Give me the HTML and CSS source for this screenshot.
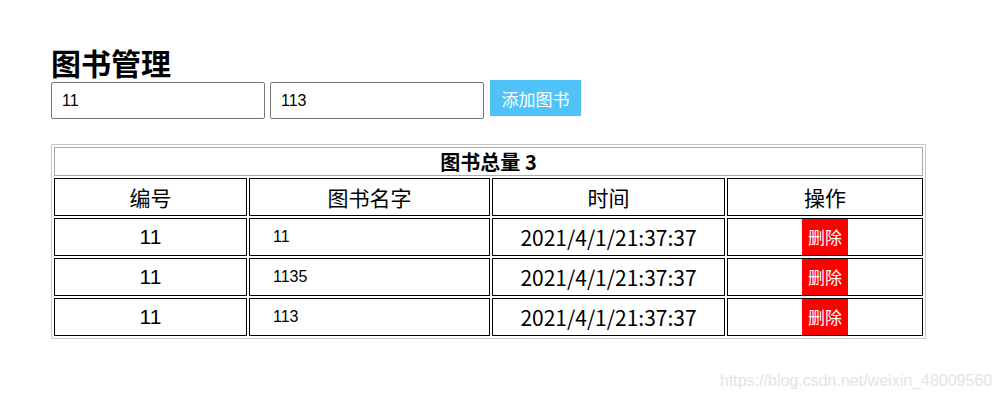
FILE: index.html
```html
<!DOCTYPE html>
<html lang="zh">
<head>
<meta charset="utf-8">
<title>图书管理</title>
<link rel="stylesheet" href="styles.css">
</head>
<body>
<div class="page">
  <h1 class="title">图书管理</h1>
  <div class="controls">
    <input class="field" type="text" value="11">
    <input class="field" type="text" value="113">
    <button class="add-btn">添加图书</button>
  </div>
  <table class="books">
    <colgroup>
      <col class="c1">
      <col class="c2">
      <col class="c3">
      <col class="c4">
    </colgroup>
    <tr>
      <th class="caption" colspan="4">图书总量 3</th>
    </tr>
    <tr class="head">
      <td>编号</td>
      <td>图书名字</td>
      <td>时间</td>
      <td>操作</td>
    </tr>
    <tr>
      <td class="num">11</td>
      <td class="name">11</td>
      <td class="time">2021/4/1/21:37:37</td>
      <td class="op"><button class="del-btn">删除</button></td>
    </tr>
    <tr>
      <td class="num">11</td>
      <td class="name">1135</td>
      <td class="time">2021/4/1/21:37:37</td>
      <td class="op"><button class="del-btn">删除</button></td>
    </tr>
    <tr>
      <td class="num">11</td>
      <td class="name">113</td>
      <td class="time">2021/4/1/21:37:37</td>
      <td class="op"><button class="del-btn">删除</button></td>
    </tr>
  </table>
</div>
<div class="watermark">https://blog.csdn.net/weixin_48009560</div>
</body>
</html>
```
FILE: styles.css
```css
html, body {
  margin: 0;
  padding: 0;
  background: #ffffff;
}
body {
  font-family: "Noto Sans CJK SC", "Liberation Sans", sans-serif;
  color: #000;
  position: relative;
  height: 401px;
  overflow: hidden;
}
.page {
  padding: 44px 0 0 51px;
}
.title {
  margin: 0;
  font-size: 30px;
  line-height: 36px;
  font-weight: bold;
}
.controls {
  display: flex;
  align-items: flex-start;
  gap: 5px;
  height: 39px;
}
.field {
  box-sizing: border-box;
  width: 214px;
  height: 37px;
  margin: 2px 0 0 0;
  padding: 0 10px;
  border: 1px solid #767676;
  border-radius: 2px;
  font-family: "Liberation Sans", sans-serif;
  font-size: 16px;
  color: #000;
  outline: none;
}
.add-btn {
  box-sizing: border-box;
  width: 91px;
  height: 36px;
  margin: 0 0 0 1px;
  padding: 0;
  border: none;
  background: #4fc3f7;
  color: #fff;
  font-family: "Noto Sans CJK SC", sans-serif;
  font-size: 17px;
}
.books {
  margin-top: 25px;
  width: 875px;
  border: 1px solid #c8c8c8;
  border-collapse: separate;
  border-spacing: 2px;
  table-layout: fixed;
}
.c1 { width: 193px; }
.c2 { width: 241px; }
.c3 { width: 233px; }
.c4 { width: 196px; }
.books td, .books th {
  box-sizing: border-box;
  border: 1px solid #000;
  padding: 0;
  height: 38px;
  text-align: center;
  font-size: 21px;
  font-weight: normal;
  vertical-align: middle;
}
.books th.caption {
  border: 1px solid #a9a9a9;
  height: 29px;
  font-weight: bold;
  font-size: 20px;
  line-height: 27px;
}
.books td.num {
  font-family: "Liberation Sans", sans-serif;
  font-size: 21px;
}
.books td.name {
  text-align: left;
  padding-left: 23px;
  font-family: "Liberation Sans", sans-serif;
  font-size: 16px;
}
.books td.op {
  line-height: 0;
}
.del-btn {
  display: inline-block;
  height: 36px;
  margin: 0;
  padding: 0 6px;
  border: none;
  background: #ff0000;
  color: #fff;
  font-family: "Noto Sans CJK SC", sans-serif;
  font-size: 17px;
  line-height: 36px;
  vertical-align: top;
}
.watermark {
  position: absolute;
  left: 720px;
  top: 372px;
  font-family: "Liberation Sans", sans-serif;
  font-size: 16px;
  color: #e4e4e4;
  white-space: nowrap;
}
```
